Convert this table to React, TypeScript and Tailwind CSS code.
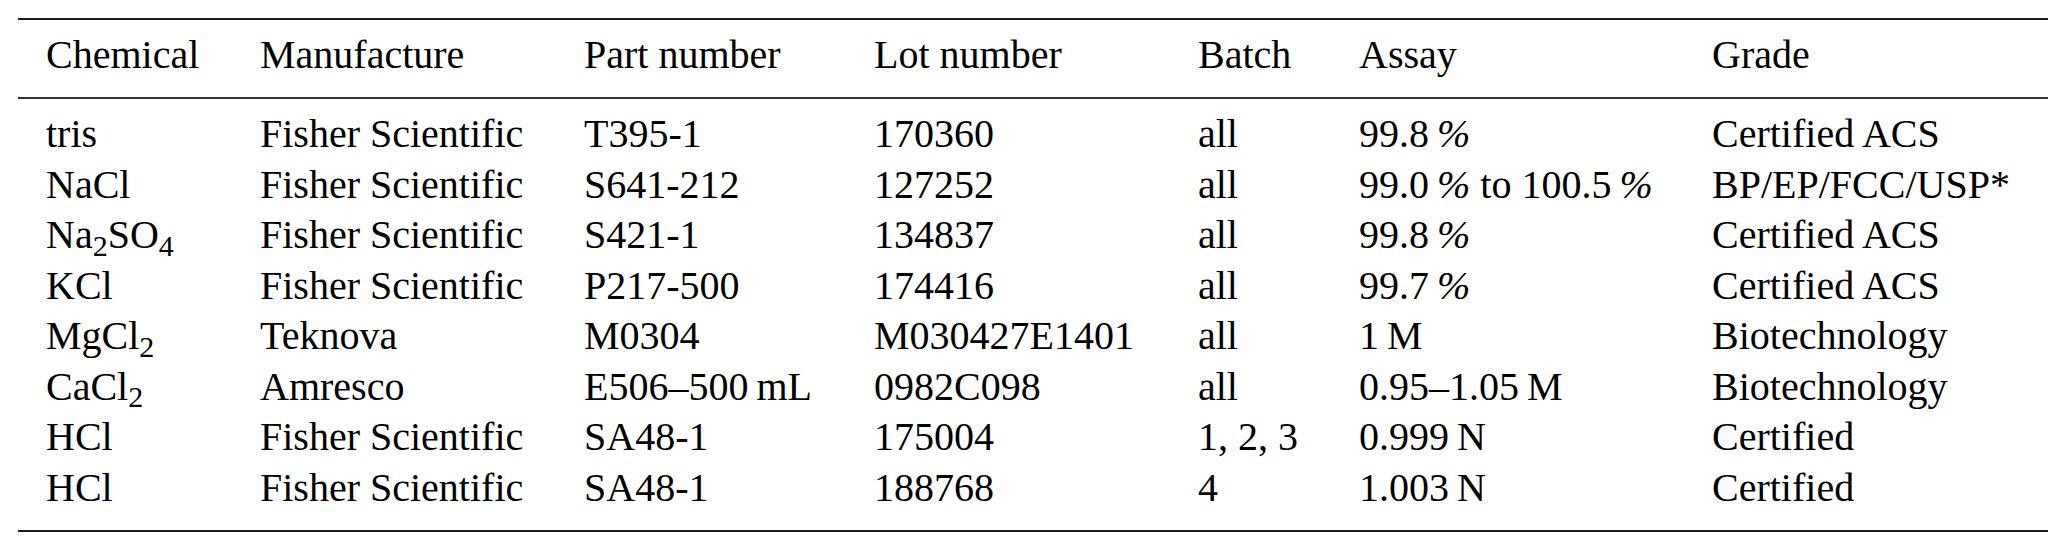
import React from 'react';

const cols =
  'grid grid-cols-[214px_324px_290px_324px_161px_353px_1fr] whitespace-nowrap';

const Pct = () => <span className="italic">%</span>;

type Row = {
  chem: React.ReactNode;
  maker: string;
  part: string;
  lot: string;
  batch: string;
  assay: React.ReactNode;
  grade: string;
};

const rows: Row[] = [
  { chem: 'tris', maker: 'Fisher Scientific', part: 'T395-1', lot: '170360', batch: 'all', assay: <>99.8{'\u2009'}<Pct /></>, grade: 'Certified ACS' },
  {
    chem: 'NaCl', maker: 'Fisher Scientific', part: 'S641-212', lot: '127252', batch: 'all',
    assay: <>99.0{'\u2009'}<Pct /> to 100.5{'\u2009'}<Pct /></>,
    grade: 'BP/EP/FCC/USP*',
  },
  {
    chem: (
      <>
        Na<sub>2</sub>SO<sub>4</sub>
      </>
    ),
    maker: 'Fisher Scientific', part: 'S421-1', lot: '134837', batch: 'all', assay: <>99.8{'\u2009'}<Pct /></>, grade: 'Certified ACS',
  },
  { chem: 'KCl', maker: 'Fisher Scientific', part: 'P217-500', lot: '174416', batch: 'all', assay: <>99.7{'\u2009'}<Pct /></>, grade: 'Certified ACS' },
  {
    chem: (
      <>
        MgCl<sub>2</sub>
      </>
    ),
    maker: 'Teknova', part: 'M0304', lot: 'M030427E1401', batch: 'all', assay: '1\u2009M', grade: 'Biotechnology',
  },
  {
    chem: (
      <>
        CaCl<sub>2</sub>
      </>
    ),
    maker: 'Amresco', part: 'E506\u2013500\u2009mL', lot: '0982C098', batch: 'all', assay: '0.95\u20131.05\u2009M', grade: 'Biotechnology',
  },
  { chem: 'HCl', maker: 'Fisher Scientific', part: 'SA48-1', lot: '175004', batch: '1, 2, 3', assay: '0.999\u2009N', grade: 'Certified' },
  { chem: 'HCl', maker: 'Fisher Scientific', part: 'SA48-1', lot: '188768', batch: '4', assay: '1.003\u2009N', grade: 'Certified' },
];

export default function App() {
  return (
    <div className="w-[2067px] h-[550px] bg-white pt-[18px] pl-[18px] font-['Liberation_Serif',serif] text-[40px] leading-[50.5px] text-black">
      <div className="w-[2030px] border-t-2 border-b-2 border-[#1c1c1c]">
        <div className={`${cols} pl-[28px] pt-[10px] pb-[17px] border-b-2 border-[#333] leading-[50px]`}>
          <div>Chemical</div>
          <div>Manufacture</div>
          <div>Part number</div>
          <div>Lot number</div>
          <div>Batch</div>
          <div>Assay</div>
          <div>Grade</div>
        </div>
        <div className="pl-[28px] pt-[10px] pb-[17px]">
          {rows.map((r, i) => (
            <div key={i} className={cols}>
              <div>{r.chem}</div>
              <div>{r.maker}</div>
              <div>{r.part}</div>
              <div>{r.lot}</div>
              <div>{r.batch}</div>
              <div>{r.assay}</div>
              <div>{r.grade}</div>
            </div>
          ))}
        </div>
      </div>
    </div>
  );
}
